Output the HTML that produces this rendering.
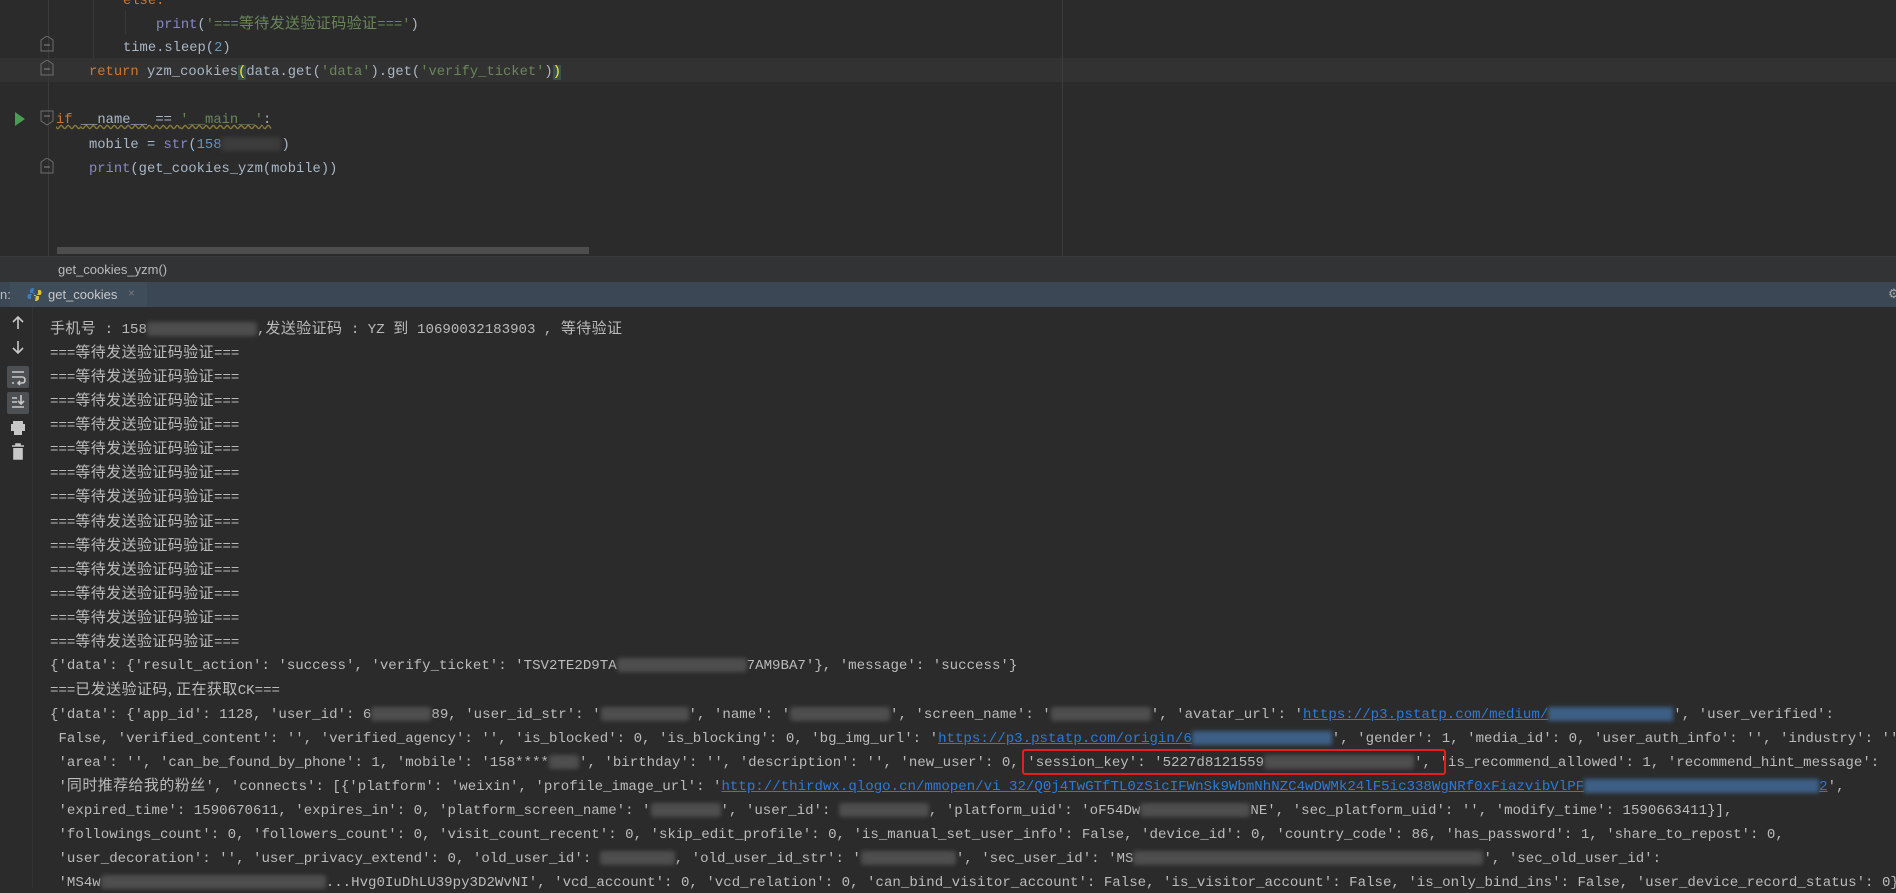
<!DOCTYPE html>
<html><head><meta charset="utf-8"><style>
*{margin:0;padding:0;box-sizing:border-box}
body{width:1896px;height:888px;background:#2b2b2b;overflow:hidden;position:relative;font-family:"Liberation Mono","Noto Sans CJK SC",monospace;}
.l{position:absolute;white-space:pre;font-size:13.8px;line-height:20px;height:20px;color:#a9b7c6}
.c{position:absolute;white-space:pre;font-size:14.1px;line-height:20px;height:20px;color:#bbbbbb;left:50px}
.z{font-family:"Noto Sans CJK SC","WenQuanYi Zen Hei",sans-serif;font-size:15px;letter-spacing:0.4px;line-height:1}
.k{color:#cc7832}.s{color:#6a8759}.b{color:#8888c6}.n{color:#6897bb}
.a{color:#287bde;text-decoration:underline}
.bl{display:inline-block;height:14px;vertical-align:middle;background:#4e4e4e;filter:blur(2px);border-radius:3px}
.bu{display:inline-block;height:14px;vertical-align:middle;background:#3d5f86;filter:blur(2px)}
</style></head><body>
<div style="position:absolute;left:0;top:58px;width:1896px;height:24px;background:#323232"></div>
<div style="position:absolute;left:48px;top:0;width:1px;height:256px;background:#3a3a3a"></div>
<div style="position:absolute;left:1062px;top:0;width:1px;height:256px;background:#3d3d3d"></div>
<div style="position:absolute;left:93px;top:0;width:1px;height:58px;background:#373737"></div>
<div style="position:absolute;left:125px;top:10px;width:1px;height:24px;background:#373737"></div>
<svg style="position:absolute;left:40px;top:36px" width="14" height="16"><path d="M1 4 L7 0 L13 4 V15 H1 Z" fill="none" stroke="#6e6e6e"/><path d="M4 9H10" stroke="#888"/></svg>
<svg style="position:absolute;left:40px;top:60px" width="14" height="16"><path d="M1 4 L7 0 L13 4 V15 H1 Z" fill="none" stroke="#6e6e6e"/><path d="M4 9H10" stroke="#888"/></svg>
<svg style="position:absolute;left:40px;top:110px" width="14" height="16"><path d="M1 1 H13 V11 L7 15 L1 11 Z" fill="none" stroke="#6e6e6e"/><path d="M4 6H10" stroke="#888"/></svg>
<svg style="position:absolute;left:40px;top:158px" width="14" height="16"><path d="M1 4 L7 0 L13 4 V15 H1 Z" fill="none" stroke="#6e6e6e"/><path d="M4 9H10" stroke="#888"/></svg>
<svg style="position:absolute;left:14px;top:111px" width="12" height="16"><path d="M1 1 L11 8 L1 15 Z" fill="#499c54"/></svg>
<div class="l k" style="left:123px;top:-8px">else:</div>
<div class="l" style="left:156px;top:15px"><span class="b">print</span>(<span class="s">'===<span class="z">等待发送验证码验证</span>==='</span>)</div>
<div class="l" style="left:123px;top:39px">time.sleep(<span class="n">2</span>)</div>
<div class="l" style="left:89px;top:63px"><span class="k">return </span>yzm_cookies<span style="background:#3b514d;color:#ffef28">(</span>data.get(<span class="s">'data'</span>).get(<span class="s">'verify_ticket'</span>)<span style="background:#3b514d;color:#ffef28">)</span></div>
<div class="l" style="left:56px;top:111px;text-decoration:underline wavy #8a7a3a"><span class="k">if </span>__name__ == <span class="s">'__main__'</span>:</div>
<div class="l" style="left:89px;top:136px">mobile = <span class="b">str</span>(<span class="n">158</span><span class="bl" style="width:60px;background:#3c3c3c"></span>)</div>
<div class="l" style="left:89px;top:160px"><span class="b">print</span>(get_cookies_yzm(mobile))</div>
<div style="position:absolute;left:57px;top:247px;width:532px;height:7px;background:#4d4d4d"></div>
<div style="position:absolute;left:0;top:256px;width:1896px;height:26px;background:#313335;border-top:1px solid #3a3a3a"></div>
<div style="position:absolute;left:58px;top:262px;font:13px 'Liberation Sans',sans-serif;color:#bbbbbb">get_cookies_yzm()</div>
<div style="position:absolute;left:0;top:282px;width:1896px;height:25px;background:#3b4754"></div>
<div style="position:absolute;left:0;top:287px;font:13px 'Liberation Sans',sans-serif;color:#bbb">n:</div>
<div style="position:absolute;left:10px;top:282px;width:137px;height:25px;background:#3f4c5a"></div>
<svg style="position:absolute;left:27px;top:287px" width="15" height="15"><path d="M7 1 C3 1 3 3 3 4 V6 H8 V7 H2 C0 7 0 12 2 12 H4 V9 C4 8 5 7 6 7" fill="#3f7cc0"/><path d="M8 14 C12 14 12 12 12 11 V9 H7 V8 H13 C15 8 15 3 13 3 H11 V6 C11 7 10 8 9 8" fill="#e0c040"/></svg>
<div style="position:absolute;left:48px;top:287px;font:13px 'Liberation Sans',sans-serif;color:#c8c8c8">get_cookies</div>
<div style="position:absolute;left:128px;top:286px;font:12px 'Liberation Sans',sans-serif;color:#777">×</div>
<div style="position:absolute;left:1888px;top:287px;font:13px 'DejaVu Sans',sans-serif;color:#aaa">⚙</div>
<div style="position:absolute;left:32px;top:307px;width:1px;height:581px;background:#323232"></div>
<div style="position:absolute;left:7px;top:366px;width:22px;height:22px;background:#4c5052;border-radius:2px"></div>
<div style="position:absolute;left:7px;top:392px;width:22px;height:22px;background:#4c5052;border-radius:2px"></div>
<svg style="position:absolute;left:8px;top:314px" width="20" height="160" fill="none" stroke="#c8c8c8" stroke-width="1.6">
<path d="M10 3 V15 M5 8 L10 3 L15 8"/>
<path d="M10 27 V39 M5 34 L10 39 L15 34"/>
<path d="M4 58 H16 M4 63 H14 Q17 63 17 66 Q17 69 14 69 H10 M12 67 L10 69 L12 71 M4 69 H6"/>
<path d="M4 84 H9 M4 88 H9 M4 93 H16 M13 81 V90 M10 87 L13 90 L16 87"/>
<path d="M5 110 V107 H15 V110 M3 110 H17 V117 H3 Z M6 117 V121 H14 V117" fill="#c8c8c8" stroke="none"/>
<path d="M4 132 H16 M8 132 V130 H12 V132 M6 134 V145 H14 V134" fill="#c8c8c8"/>
</svg>
<div class="c" style="top:320px"><span class="z">手机号</span> : 158<span class="bl" style="width:110px"></span>,<span class="z">发送验证码</span> : YZ <span class="z">到</span> 10690032183903 , <span class="z">等待验证</span></div>
<div class="c" style="top:344px">===<span class="z">等待发送验证码验证</span>===</div>
<div class="c" style="top:368px">===<span class="z">等待发送验证码验证</span>===</div>
<div class="c" style="top:392px">===<span class="z">等待发送验证码验证</span>===</div>
<div class="c" style="top:416px">===<span class="z">等待发送验证码验证</span>===</div>
<div class="c" style="top:440px">===<span class="z">等待发送验证码验证</span>===</div>
<div class="c" style="top:464px">===<span class="z">等待发送验证码验证</span>===</div>
<div class="c" style="top:488px">===<span class="z">等待发送验证码验证</span>===</div>
<div class="c" style="top:513px">===<span class="z">等待发送验证码验证</span>===</div>
<div class="c" style="top:537px">===<span class="z">等待发送验证码验证</span>===</div>
<div class="c" style="top:561px">===<span class="z">等待发送验证码验证</span>===</div>
<div class="c" style="top:585px">===<span class="z">等待发送验证码验证</span>===</div>
<div class="c" style="top:609px">===<span class="z">等待发送验证码验证</span>===</div>
<div class="c" style="top:633px">===<span class="z">等待发送验证码验证</span>===</div>
<div class="c" style="top:656px">{'data': {'result_action': 'success', 'verify_ticket': 'TSV2TE2D9TA<span class="bl" style="width:130px"></span>7AM9BA7'}, 'message': 'success'}</div>
<div class="c" style="top:681px">===<span class="z">已发送验证码, 正在获取</span>CK===</div>
<div class="c" style="top:705px">{'data': {'app_id': 1128, 'user_id': 6<span class="bl" style="width:60px"></span>89, 'user_id_str': '<span class="bl" style="width:88px"></span>', 'name': '<span class="bl" style="width:100px"></span>', 'screen_name': '<span class="bl" style="width:100px"></span>', 'avatar_url': '<span class="a">https://p3.pstatp.com/medium/</span><span class="bu" style="width:125px"></span>', 'user_verified':</div>
<div class="c" style="top:729px"> False, 'verified_content': '', 'verified_agency': '', 'is_blocked': 0, 'is_blocking': 0, 'bg_img_url': '<span class="a">https://p3.pstatp.com/origin/6</span><span class="bu" style="width:140px"></span>', 'gender': 1, 'media_id': 0, 'user_auth_info': '', 'industry': ''</div>
<div class="c" style="top:753px"> 'area': '', 'can_be_found_by_phone': 1, 'mobile': '158****<span class="bl" style="width:30px"></span>', 'birthday': '', 'description': '', 'new_user': 0, 'session_key': '5227d8121559<span class="bl" style="width:150px"></span>', 'is_recommend_allowed': 1, 'recommend_hint_message':</div>
<div class="c" style="top:777px"> '<span class="z">同时推荐给我的粉丝</span>', 'connects': [{'platform': 'weixin', 'profile_image_url': '<span class="a">http://thirdwx.qlogo.cn/mmopen/vi_32/Q0j4TwGTfTL0zSicIFWnSk9WbmNhNZC4wDWMk24lF5ic338WgNRf0xFiazvibVlPF</span><span class="bu" style="width:235px"></span><span class="a">2</span>',</div>
<div class="c" style="top:801px"> 'expired_time': 1590670611, 'expires_in': 0, 'platform_screen_name': '<span class="bl" style="width:70px"></span>', 'user_id': <span class="bl" style="width:90px"></span>, 'platform_uid': 'oF54Dw<span class="bl" style="width:110px"></span>NE', 'sec_platform_uid': '', 'modify_time': 1590663411}],</div>
<div class="c" style="top:825px"> 'followings_count': 0, 'followers_count': 0, 'visit_count_recent': 0, 'skip_edit_profile': 0, 'is_manual_set_user_info': False, 'device_id': 0, 'country_code': 86, 'has_password': 1, 'share_to_repost': 0,</div>
<div class="c" style="top:849px"> 'user_decoration': '', 'user_privacy_extend': 0, 'old_user_id': <span class="bl" style="width:75px"></span>, 'old_user_id_str': '<span class="bl" style="width:95px"></span>', 'sec_user_id': 'MS<span class="bl" style="width:350px"></span>', 'sec_old_user_id':</div>
<div class="c" style="top:873px"> 'MS4w<span class="bl" style="width:225px"></span>...Hvg0IuDhLU39py3D2WvNI', 'vcd_account': 0, 'vcd_relation': 0, 'can_bind_visitor_account': False, 'is_visitor_account': False, 'is_only_bind_ins': False, 'user_device_record_status': 0},</div>
<div style="position:absolute;left:1022px;top:749px;width:424px;height:26px;border:2px solid #e4201e;border-radius:3px"></div>
</body></html>
